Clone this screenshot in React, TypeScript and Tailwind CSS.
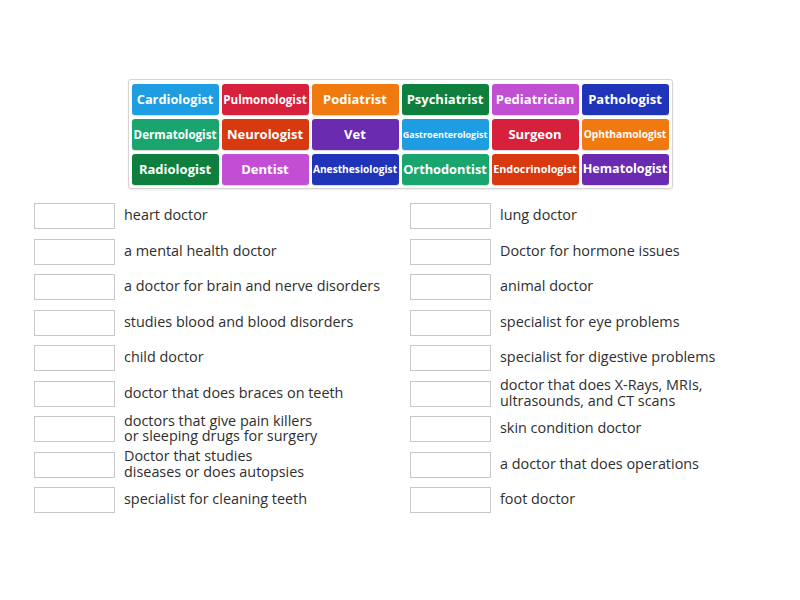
import React from "react";

const tiles = [
  { label: "Cardiologist", bg: "bg-[#1e9de3]", size: "text-[12.8px]" },
  { label: "Pulmonologist", bg: "bg-[#d7203c]", size: "text-[11.6px]" },
  { label: "Podiatrist", bg: "bg-[#f07a10]", size: "text-[13px]" },
  { label: "Psychiatrist", bg: "bg-[#0e7f3e]", size: "text-[13px]" },
  { label: "Pediatrician", bg: "bg-[#c24fd3]", size: "text-[13px]" },
  { label: "Pathologist", bg: "bg-[#1f34b8]", size: "text-[13px]" },
  { label: "Dermatologist", bg: "bg-[#1ba56e]", size: "text-[11.6px]" },
  { label: "Neurologist", bg: "bg-[#d8390f]", size: "text-[13px]" },
  { label: "Vet", bg: "bg-[#6a2bb1]", size: "text-[13px]" },
  { label: "Gastroenterologist", bg: "bg-[#1e9de3]", size: "text-[9px]" },
  { label: "Surgeon", bg: "bg-[#d7203c]", size: "text-[13px]" },
  { label: "Ophthamologist", bg: "bg-[#f07a10]", size: "text-[10.2px]" },
  { label: "Radiologist", bg: "bg-[#0e7f3e]", size: "text-[13px]" },
  { label: "Dentist", bg: "bg-[#c24fd3]", size: "text-[13px]" },
  { label: "Anesthesiologist", bg: "bg-[#1f34b8]", size: "text-[10.2px]" },
  { label: "Orthodontist", bg: "bg-[#1ba56e]", size: "text-[12.8px]" },
  { label: "Endocrinologist", bg: "bg-[#d8390f]", size: "text-[10.8px]" },
  { label: "Hematologist", bg: "bg-[#6a2bb1]", size: "text-[12.6px]" },
];

const leftClues = [
  ["heart doctor"],
  ["a mental health doctor"],
  ["a doctor for brain and nerve disorders"],
  ["studies blood and blood disorders"],
  ["child doctor"],
  ["doctor that does braces on teeth"],
  ["doctors that give pain killers", "or sleeping drugs for surgery"],
  ["Doctor that studies", "diseases or does autopsies"],
  ["specialist for cleaning teeth"],
];

const rightClues = [
  ["lung doctor"],
  ["Doctor for hormone issues"],
  ["animal doctor"],
  ["specialist for eye problems"],
  ["specialist for digestive problems"],
  ["doctor that does X-Rays, MRIs,", "ultrasounds, and CT scans"],
  ["skin condition doctor"],
  ["a doctor that does operations"],
  ["foot doctor"],
];

const ClueColumn = ({ clues }: { clues: string[][] }) => (
  <div className="flex flex-col gap-y-[9.5px]">
    {clues.map((lines, i) => (
      <div key={i} className="flex items-center gap-[9px] h-[26px]">
        <div className="w-[81px] h-[26px] shrink-0 border border-[#c8c8c8] bg-white" />
        <div className="text-[14.4px] leading-[15.5px] text-[#2e2e2e] whitespace-nowrap pb-[2px]">
          {lines.map((l, j) => (
            <div key={j}>{l}</div>
          ))}
        </div>
      </div>
    ))}
  </div>
);

const App = () => {
  return (
    <div
      className="w-[800px] h-[600px] bg-white overflow-hidden"
      style={{ fontFamily: '"Open Sans", "Liberation Sans", sans-serif' }}
    >
      <div className="flex justify-center pt-[79px]">
        <div className="border border-[#d4d4d4] rounded-[3px] px-[3px] pt-[4px] pb-[3px] shadow-[0_1px_2px_rgba(0,0,0,0.08)]">
          <div className="grid grid-cols-[repeat(6,87px)] gap-x-[3px] gap-y-[4px]">
            {tiles.map((t) => (
              <div
                key={t.label}
                className={`${t.bg} ${t.size} h-[31px] rounded-[3px] flex items-center justify-center text-white font-bold whitespace-nowrap shadow-[0_1px_1px_rgba(0,0,0,0.15)]`}
              >
                {t.label}
              </div>
            ))}
          </div>
        </div>
      </div>

      <div className="grid grid-cols-[376px_376px] pl-[34px] mt-[14px]">
        <ClueColumn clues={leftClues} />
        <ClueColumn clues={rightClues} />
      </div>
    </div>
  );
};

export default App;
